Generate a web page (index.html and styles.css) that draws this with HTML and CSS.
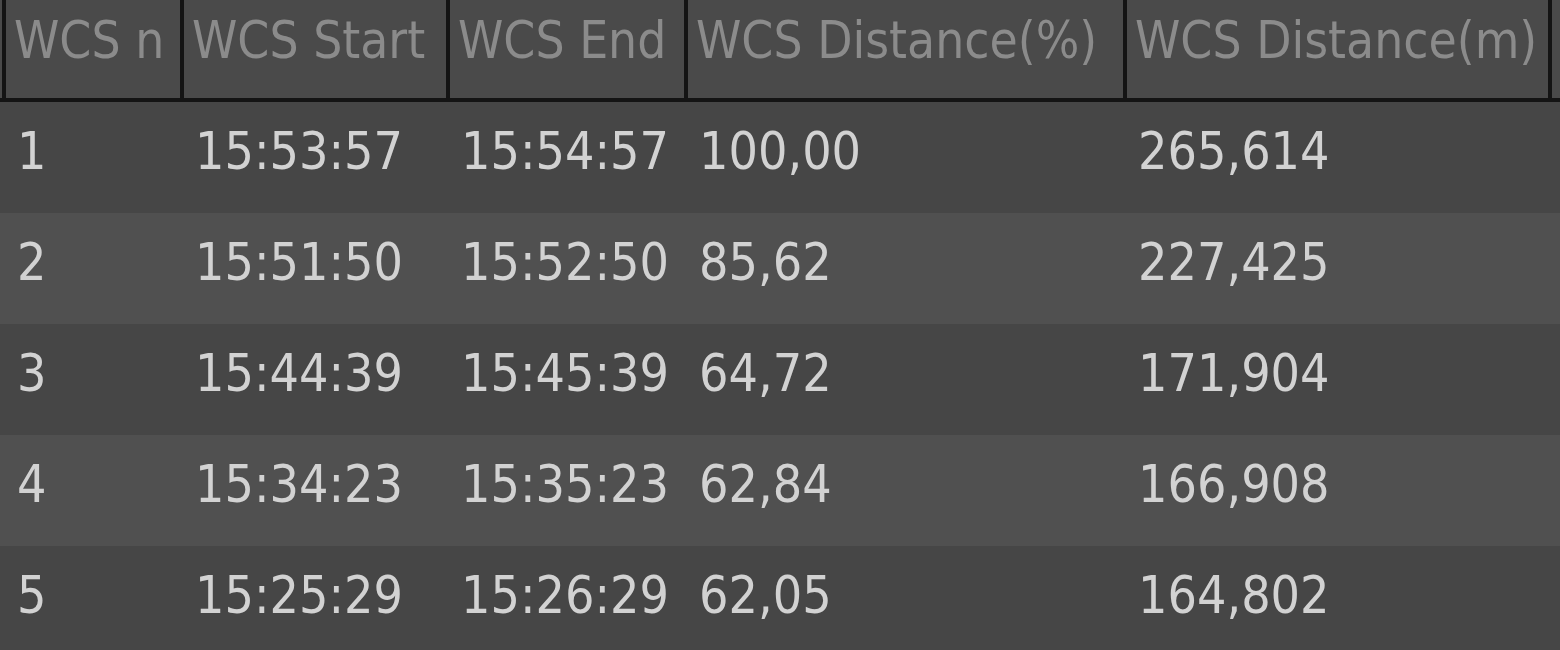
FILE: index.html
```html
<!DOCTYPE html>
<html>
<head>
<meta charset="utf-8">
<title>WCS</title>
<link rel="stylesheet" href="styles.css">
</head>
<body>
<div class="table">
  <div class="head">
    <div class="hcell">WCS n</div>
    <div class="hcell">WCS Start</div>
    <div class="hcell">WCS End</div>
    <div class="hcell">WCS Distance(%)</div>
    <div class="hcell">WCS Distance(m)</div>
    <div class="hcell"></div>
  </div>
  <div class="row odd">
    <div class="cell">1</div><div class="cell">15:53:57</div><div class="cell">15:54:57</div><div class="cell">100,00</div><div class="cell">265,614</div><div class="cell"></div>
  </div>
  <div class="row even">
    <div class="cell">2</div><div class="cell">15:51:50</div><div class="cell">15:52:50</div><div class="cell">85,62</div><div class="cell">227,425</div><div class="cell"></div>
  </div>
  <div class="row odd">
    <div class="cell">3</div><div class="cell">15:44:39</div><div class="cell">15:45:39</div><div class="cell">64,72</div><div class="cell">171,904</div><div class="cell"></div>
  </div>
  <div class="row even">
    <div class="cell">4</div><div class="cell">15:34:23</div><div class="cell">15:35:23</div><div class="cell">62,84</div><div class="cell">166,908</div><div class="cell"></div>
  </div>
  <div class="row odd">
    <div class="cell">5</div><div class="cell">15:25:29</div><div class="cell">15:26:29</div><div class="cell">62,05</div><div class="cell">164,802</div><div class="cell"></div>
  </div>
</div>
</body>
</html>
```

FILE: styles.css
```css
html, body {
  margin: 0;
  padding: 0;
  width: 1560px;
  height: 650px;
  overflow: hidden;
  background: #474747;
}

.table {
  font-family: "DejaVu Sans Condensed", "DejaVu Sans", sans-serif;
  display: flex;
  flex-direction: column;
}

.head,
.row {
  display: grid;
  grid-template-columns: 178px 266px 238px 439px 425px 1fr;
  padding-left: 2px;
}

.head {
  background: #4a4a4a;
  height: 98px;
  border-bottom: 4px solid #141414;
}

.hcell {
  border-left: 4px solid #141414;
  padding: 15px 0 0 8px;
  font-size: 51px;
  line-height: 51px;
  color: #8b8b8b;
  white-space: nowrap;
  overflow: hidden;
}

.row {
  height: 111px;
}

.row.odd {
  background: #464646;
}

.row.even {
  background: #505050;
}

.cell {
  padding: 23px 0 0 15px;
  font-size: 51.5px;
  line-height: 52px;
  color: #d2d2d2;
  white-space: nowrap;
}
```
